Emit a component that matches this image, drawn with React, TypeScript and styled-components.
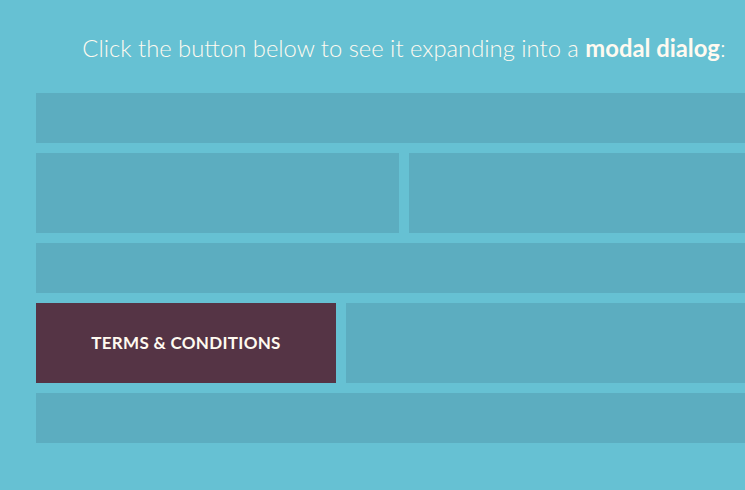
import React from 'react';
import styled, { createGlobalStyle } from 'styled-components';

const GlobalStyle = createGlobalStyle`
  html, body {
    margin: 0;
    padding: 0;
    background-color: #66c1d3;
    overflow: hidden;
  }
  body {
    font-family: Lato, "Open Sans", sans-serif;
  }
`;

const Page = styled.div`
  width: 736px;
  padding: 0 0 0 36px;
`;

const Intro = styled.p`
  margin: 0;
  padding: 33px 0 30px;
  text-align: center;
  font-size: 23.8px;
  font-weight: 300;
  line-height: 30px;
  color: #fffaf0;
  white-space: nowrap;

  strong {
    font-weight: 700;
  }
`;

const Rows = styled.div`
  display: flex;
  flex-direction: column;
  gap: 10px;
`;

const Row = styled.div<{ tall?: boolean }>`
  display: flex;
  gap: 10px;
  height: ${props => (props.tall ? 80 : 50)}px;
`;

const Block = styled.div`
  flex: 1;
  background-color: #5cadc0;
`;

const TermsButton = styled.button`
  flex: 0 0 300px;
  border: none;
  margin: 0;
  padding: 0 0 2px;
  background-color: #553445;
  color: #fffaf0;
  font-family: Lato, "Open Sans", sans-serif;
  font-size: 17px;
  font-weight: 700;
  letter-spacing: 0.3px;
  text-transform: uppercase;
  cursor: pointer;
`;

export default function App(): React.ReactElement {
  return (
    <>
      <GlobalStyle />
      <Page>
        <Intro>
          Click the button below to see it expanding into a <strong>modal dialog</strong>:
        </Intro>
        <Rows>
          <Row>
            <Block />
          </Row>
          <Row tall>
            <Block />
            <Block />
          </Row>
          <Row>
            <Block />
          </Row>
          <Row tall>
            <TermsButton>Terms &amp; Conditions</TermsButton>
            <Block />
          </Row>
          <Row>
            <Block />
          </Row>
        </Rows>
      </Page>
    </>
  );
}
